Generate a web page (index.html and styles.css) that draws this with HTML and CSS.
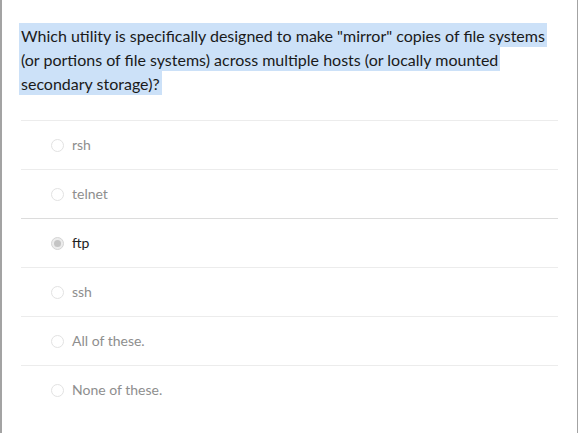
FILE: index.html
```html
<!DOCTYPE html>
<html lang="en">
<head>
    <meta charset="UTF-8">
    <meta name="viewport" content="width=device-width, initial-scale=1.0">
    <title>Quiz Question</title>
    <link rel="stylesheet" href="styles.css">
</head>
<body>
    <div class="panel">
        <div class="question">
            <span class="selected-text">Which utility is specifically designed to make "mirror" copies of file systems (or portions of file systems) across multiple hosts (or locally mounted secondary storage)?</span>
        </div>
        <ul class="answers">
            <li class="answer"><span class="radio"></span><span class="label">rsh</span></li>
            <li class="answer"><span class="radio"></span><span class="label">telnet</span></li>
            <li class="answer checked"><span class="radio"></span><span class="label">ftp</span></li>
            <li class="answer"><span class="radio"></span><span class="label">ssh</span></li>
            <li class="answer"><span class="radio"></span><span class="label">All of these.</span></li>
            <li class="answer"><span class="radio"></span><span class="label">None of these.</span></li>
        </ul>
    </div>
</body>
</html>
```

FILE: styles.css
```css
body {
    margin: 0;
    background-color: #fff;
    font-family: Lato, "Open Sans", sans-serif;
    color: #222;
}

.panel {
    width: 575px;
    height: 433px;
    border-left: 2px solid #a3a3a3;
    border-right: 1px solid #a3a3a3;
    box-sizing: content-box;
}

.question {
    padding: 24px 20px 0 19px;
    font-size: 16px;
    line-height: 24px;
    color: #1a1a1a;
}

.selected-text {
    background-color: #cce1f8;
    padding: 3px 2px 2px 2px;
    margin-left: -2px;
    -webkit-box-decoration-break: clone;
    box-decoration-break: clone;
}

.answers {
    list-style: none;
    margin: 24px 19px 0 19px;
    padding: 0;
    border-top: 1px solid #ececec;
}

.answer {
    display: flex;
    align-items: center;
    height: 48px;
    border-bottom: 1px solid #ececec;
    padding-left: 30px;
}

.answer:last-child {
    border-bottom: none;
}

.answer:nth-child(2) {
    border-bottom-color: #dcdcdc;
}

.radio {
    width: 11px;
    height: 11px;
    border: 1px solid #e2e2e2;
    border-radius: 50%;
    background-color: #fff;
    margin-right: 8px;
    position: relative;
}

.label {
    font-size: 14px;
    color: #8e8e8e;
    margin-top: -2px;
}

.checked .label {
    color: #222;
}

.checked .radio {
    border-color: #d4d4d4;
    background-color: #ececec;
}

.checked .radio::after {
    content: "";
    position: absolute;
    left: 2px;
    top: 2px;
    width: 7px;
    height: 7px;
    border-radius: 50%;
    background-color: #c4c4c4;
}
```
